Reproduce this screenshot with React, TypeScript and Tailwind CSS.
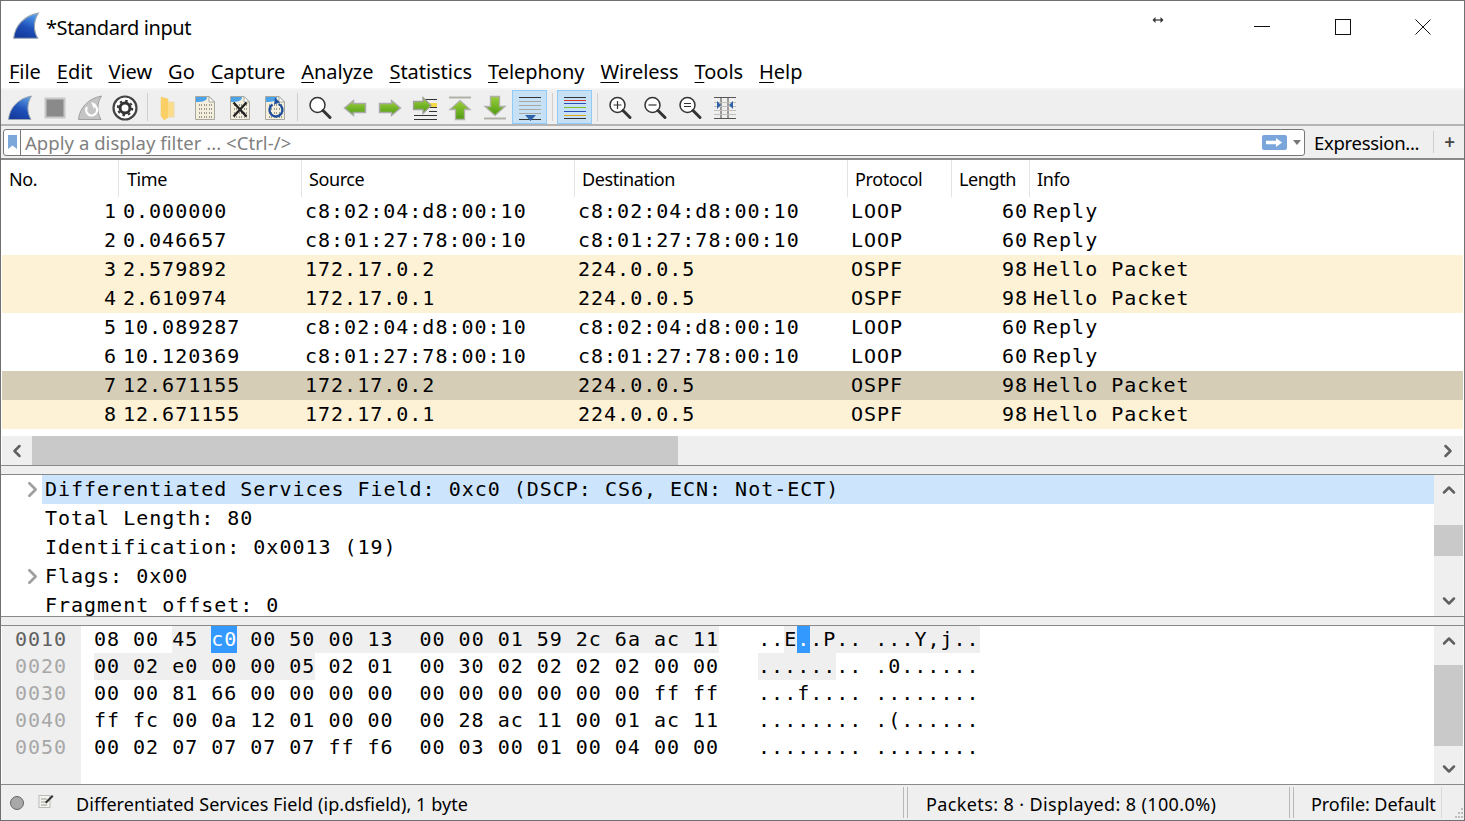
import React from 'react';
import { ChevronLeft, ChevronRight, ChevronUp, ChevronDown } from 'lucide-react';

const UI = "font-['Noto_Sans','Open_Sans',sans-serif]";
const MONO = "font-['DejaVu_Sans_Mono',monospace]";

const packets = [
  ['1', '0.000000', 'c8:02:04:d8:00:10', 'c8:02:04:d8:00:10', 'LOOP', '60', 'Reply', ''],
  ['2', '0.046657', 'c8:01:27:78:00:10', 'c8:01:27:78:00:10', 'LOOP', '60', 'Reply', ''],
  ['3', '2.579892', '172.17.0.2', '224.0.0.5', 'OSPF', '98', 'Hello Packet', 'bg-[#fdf1d6]'],
  ['4', '2.610974', '172.17.0.1', '224.0.0.5', 'OSPF', '98', 'Hello Packet', 'bg-[#fdf1d6]'],
  ['5', '10.089287', 'c8:02:04:d8:00:10', 'c8:02:04:d8:00:10', 'LOOP', '60', 'Reply', ''],
  ['6', '10.120369', 'c8:01:27:78:00:10', 'c8:01:27:78:00:10', 'LOOP', '60', 'Reply', ''],
  ['7', '12.671155', '172.17.0.2', '224.0.0.5', 'OSPF', '98', 'Hello Packet', 'bg-[#d6cdb7]'],
  ['8', '12.671155', '172.17.0.1', '224.0.0.5', 'OSPF', '98', 'Hello Packet', 'bg-[#fdf1d6]'],
];

const hexRows = [
  ['0030', '00 00 81 66 00 00 00 00  00 00 00 00 00 00 ff ff', '...f.... ........'],
  ['0040', 'ff fc 00 0a 12 01 00 00  00 28 ac 11 00 01 ac 11', '........ .(......'],
  ['0050', '00 02 07 07 07 07 ff f6  00 03 00 01 00 04 00 00', '........ ........'],
];

const Svg = ({ children }: { children: React.ReactNode }) => (
  <svg width="28" height="28" viewBox="0 0 28 28" fill="none">{children}</svg>
);

const Fin = ({ size = 28, id = 'finBlue', light = '#5a9be0' }: { size?: number; id?: string; light?: string }) => (
  <svg width={size} height={size} viewBox="0 0 28 28">
    <defs>
      <linearGradient id={id} x1="0.7" y1="0" x2="0.3" y2="1">
        <stop offset="0" stopColor={light} />
        <stop offset="0.55" stopColor="#1f4fb8" />
        <stop offset="1" stopColor="#143a9c" />
      </linearGradient>
    </defs>
    <path d="M2.500 25.500C3.500 14 12 4.500 25.500 2C21 9 20.500 18 25 25.500Z" fill={`url(#${id})`} stroke="#9aa4b0" strokeWidth="1" />
  </svg>
);

const FileIcon = ({ children }: { children?: React.ReactNode }) => (
  <Svg>
    <path d="M4.500 2.500H18L23.500 8V25.500H4.500Z" fill="#f3efdc" stroke="#a8a8a0" />
    <path d="M5 3H16C16 7 12 8 5 8Z" fill="#4da3e8" />
    <path d="M18 2.500V8H23.500Z" fill="#ffffff" stroke="#a8a8a0" />
    {[11, 15, 19, 23].map((y) => (
      <path key={y} d={`M8 ${y}h3M13 ${y}h3M18 ${y}h3`} stroke="#9a9a90" strokeWidth="2" strokeDasharray="1 1" />
    ))}
    {children}
  </Svg>
);

const Magnifier = ({ sign }: { sign?: 'plus' | 'minus' | 'equal' }) => (
  <Svg>
    <circle cx="11.500" cy="11" r="7.500" fill="#fff" stroke="#333" strokeWidth="1.500" />
    <path d="M17 16.500L24 23.500" stroke="#333" strokeWidth="3" strokeLinecap="round" />
    {sign === 'plus' && <path d="M7.500 11h8M11.500 7v8" stroke="#333" strokeWidth="1.200" />}
    {sign === 'minus' && <path d="M7.500 11h8" stroke="#333" strokeWidth="1.200" />}
    {sign === 'equal' && <path d="M8 9.500h7M8 12.500h7" stroke="#333" strokeWidth="1.200" />}
  </Svg>
);

const greenArrow = 'url(#arrowGreen)';
const ArrowDefs = () => (
  <defs>
    <linearGradient id="arrowGreen" x1="0" y1="0" x2="0" y2="1">
      <stop offset="0" stopColor="#9bd03c" />
      <stop offset="1" stopColor="#4f9a12" />
    </linearGradient>
  </defs>
);

const LeftArrow = () => (
  <Svg>
    <ArrowDefs />
    <path d="M3.500 14L12.500 6.500V9.500H24.500V18.500H12.500V21.500Z" fill={greenArrow} stroke="#aaa" strokeWidth="1.500" />
  </Svg>
);

const RightArrow = () => (
  <Svg>
    <ArrowDefs />
    <path d="M24.500 14L15.500 6.500V9.500H3.500V18.500H15.500V21.500Z" fill={greenArrow} stroke="#aaa" strokeWidth="1.500" />
  </Svg>
);

const GoToIcon = () => (
  <Svg>
    <ArrowDefs />
    <path d="M14 5.500h12M18 9.500h8M18 13.500h8M18 17.500h8M3 21.500h23M3 25.500h23" stroke="#333" strokeWidth="1.200" />
    <path d="M18 9h8v4h-8z" fill="#f5d94a" />
    <path d="M20 11.500L12 3.500V7.500H2.500V15.500H12V19.500Z" fill={greenArrow} stroke="#a0a098" strokeWidth="1.300" />
  </Svg>
);

const TopIcon = () => (
  <Svg>
    <ArrowDefs />
    <path d="M3 3.500H25" stroke="#b0b0a8" strokeWidth="2" />
    <path d="M14 6.500L24 15.500H18.500V25.500H9.500V15.500H4Z" fill={greenArrow} stroke="#b0b0a8" strokeWidth="1.300" />
  </Svg>
);

const BottomIcon = () => (
  <Svg>
    <ArrowDefs />
    <path d="M3 24.500H25" stroke="#b0b0a8" strokeWidth="2" />
    <path d="M14 21.500L24 12.500H18.500V2.500H9.500V12.500H4Z" fill={greenArrow} stroke="#b0b0a8" strokeWidth="1.300" />
  </Svg>
);

const AutoScroll = () => (
  <Svg>
    <path d="M3 3.500h22" stroke="#333" />
    <path d="M3 7.500h22M3 11.500h22M3 15.500h22M3 19.500h22" stroke="#a8a8a0" />
    <path d="M3 25.500h22" stroke="#333" />
    <path d="M9 21h11l-5.500 6z" fill="#2f62a8" />
  </Svg>
);

const Coloring = () => (
  <Svg>
    <path d="M3 3.500h22" stroke="#333" />
    <path d="M3 6.500h22" stroke="#e0302a" />
    <path d="M3 9.500h22" stroke="#2a50b8" />
    <path d="M3 13.500h22" stroke="#7cc02a" />
    <path d="M3 17.500h22" stroke="#2a50b8" />
    <path d="M3 21.500h22" stroke="#e0a810" />
    <path d="M3 24.500h22" stroke="#333" />
  </Svg>
);

const ResizeCols = () => (
  <Svg>
    <path d="M3 3.500h22M3 24.500h22M10 3v22M17 3v22" stroke="#555" strokeWidth="1.100" />
    <path d="M3 8.500h22M3 12.500h22M3 16.500h22M3 20.500h22" stroke="#c0c0b8" strokeWidth="1.100" />
    <path d="M6 7l4 4-4 4zM22 7l-4 4 4 4z" fill="#2f62a8" />
  </Svg>
);

const ToolButton = ({ children, on }: { children: React.ReactNode; on?: boolean }) => (
  <div
    className={`flex h-[34px] w-[35px] shrink-0 items-center justify-center pt-[2px] ${
      on ? 'border border-[#91c9f7] bg-[#c6e0f6]' : ''
    }`}
  >
    {children}
  </div>
);

const Sep = () => (
  <div className="flex h-[28px] w-[10px] shrink-0 justify-center">
    <div className="h-full w-px bg-[#cfcfcf]" />
  </div>
);

const ColHead = ({ label, pad, line = true }: { label: string; pad: string; line?: boolean }) => (
  <div className={`flex h-[37px] items-center pt-[2px] ${pad} ${line ? 'border-r border-[#e4e4e4]' : ''}`}>{label}</div>
);

const VScroll = ({ thumbTop, thumbH }: { thumbTop: string; thumbH: string }) => (
  <div className="flex w-[29px] shrink-0 flex-col bg-[#efefef]">
    <div className="flex h-[30px] shrink-0 items-center justify-center">
      <ChevronUp size={20} strokeWidth={3} className="text-[#606060]" />
    </div>
    <div className={`${thumbTop} ${thumbH} shrink-0 bg-[#c9c9c9]`} />
    <div className="flex-1" />
    <div className="flex h-[30px] shrink-0 items-center justify-center">
      <ChevronDown size={20} strokeWidth={3} className="text-[#606060]" />
    </div>
  </div>
);

const StatusDivider = () => (
  <div className="mx-[2px] flex h-[31px] w-[5px] shrink-0 justify-between">
    <div className="w-px bg-[#b8b8b8]" />
    <div className="w-px bg-[#b8b8b8]" />
  </div>
);

const MenuLabel = ({ first, rest }: { first: string; rest: string }) => (
  <span>
    <span className="underline decoration-1 underline-offset-[3px]">{first}</span>
    {rest}
  </span>
);

export default function App() {
  return (
    <div className={`flex h-[821px] w-[1465px] flex-col overflow-hidden border border-[#707070] bg-white text-black ${UI}`}>
      {/* title bar */}
      <div className="flex h-[53px] shrink-0 items-start">
        <div className="ml-[10px] mt-[10px]">
          <Fin size={30} id="finTitle" light="#4f9ff0" />
        </div>
        <div className="ml-[5px] mt-[12px] text-[20px] leading-[30px] tracking-[-0.4px]">*Standard input</div>
        <div className="flex-1" />
        <div className="mt-[12px] text-[#333]">
          <svg width="12" height="14" viewBox="0 0 12 14">
            <path d="M0.500 7L3.500 4V10ZM11.500 7L8.500 4V10Z" fill="#333" />
            <path d="M3 7H9" stroke="#333" strokeWidth="1.200" />
          </svg>
        </div>
        <div className="ml-[90px] mt-[18px] flex">
          <svg width="16" height="16" viewBox="0 0 16 16">
            <path d="M0 7.500H16" stroke="#111" />
          </svg>
          <svg className="ml-[65px]" width="16" height="16" viewBox="0 0 16 16">
            <rect x="0.500" y="0.500" width="15" height="15" fill="none" stroke="#111" />
          </svg>
          <svg className="ml-[64px] mr-[33px]" width="16" height="16" viewBox="0 0 16 16">
            <path d="M0.500 0.500L15.500 15.500M15.500 0.500L0.500 15.500" stroke="#111" />
          </svg>
        </div>
      </div>

      {/* menu */}
      <div className="flex h-[34px] shrink-0 items-start gap-4 pl-2 text-[20px] leading-[36px] tracking-[-0.04px]">
        <MenuLabel first="F" rest="ile" />
        <MenuLabel first="E" rest="dit" />
        <MenuLabel first="V" rest="iew" />
        <MenuLabel first="G" rest="o" />
        <MenuLabel first="C" rest="apture" />
        <MenuLabel first="A" rest="nalyze" />
        <MenuLabel first="S" rest="tatistics" />
        <MenuLabel first="T" rest="elephony" />
        <MenuLabel first="W" rest="ireless" />
        <MenuLabel first="T" rest="ools" />
        <MenuLabel first="H" rest="elp" />
      </div>

      {/* main toolbar */}
      <div className="flex h-[38px] shrink-0 items-center border-t-2 border-b-2 border-t-[#f5f5f5] border-b-[#b4b4b4] bg-[#efefef] pl-px">
        <ToolButton><Fin /></ToolButton>
        <ToolButton>
          <Svg>
            <rect x="4.500" y="4.500" width="19" height="19" fill="#8a8a8a" stroke="#c8c8c8" strokeWidth="2" />
          </Svg>
        </ToolButton>
        <ToolButton>
          <Svg>
            <path d="M2.500 25.500C3.500 14 12 4.500 25.500 2C21 9 20.500 18 25 25.500Z" fill="#c4c4c4" stroke="#a0a0a0" />
            <path d="M18 11a5.500 5.500 0 1 1-7 2" stroke="#fff" strokeWidth="2.200" />
            <path d="M15 8l5 2-2 5z" fill="#fff" />
          </Svg>
        </ToolButton>
        <ToolButton>
          <Svg>
            <circle cx="14" cy="14" r="11.500" fill="#fff" stroke="#444" strokeWidth="2.200" />
            <circle cx="14" cy="14" r="5" stroke="#333" strokeWidth="3" />
            <circle cx="14" cy="14" r="7.200" stroke="#333" strokeWidth="2" strokeDasharray="2.500 3.150" />
          </Svg>
        </ToolButton>
        <Sep />
        <ToolButton>
          <div className="-ml-[4px]">
            <Svg>
              <path d="M7 3L14 5V8H20V23H14L10 26L7 22Z" fill="#fbdc8a" stroke="#eadcae" />
              <path d="M7 3L14 5V24L10 26L7 22Z" fill="#f9cf66" />
            </Svg>
          </div>
        </ToolButton>
        <ToolButton><FileIcon /></ToolButton>
        <ToolButton>
          <FileIcon>
            <path d="M7.500 8.500L20.500 22.500M20.500 8.500L7.500 22.500" stroke="#222" strokeWidth="2.400" />
          </FileIcon>
        </ToolButton>
        <ToolButton>
          <FileIcon>
            <path d="M17.500 10a6.500 6.500 0 1 1-6 0.500" stroke="#1f4f9c" strokeWidth="2.400" />
            <path d="M14 3.500l5 5-6 2z" fill="#1f4f9c" />
          </FileIcon>
        </ToolButton>
        <Sep />
        <ToolButton><Magnifier /></ToolButton>
        <ToolButton><LeftArrow /></ToolButton>
        <ToolButton><RightArrow /></ToolButton>
        <ToolButton><GoToIcon /></ToolButton>
        <ToolButton><TopIcon /></ToolButton>
        <ToolButton><BottomIcon /></ToolButton>
        <ToolButton on><AutoScroll /></ToolButton>
        <Sep />
        <ToolButton on><Coloring /></ToolButton>
        <Sep />
        <ToolButton><Magnifier sign="plus" /></ToolButton>
        <ToolButton><Magnifier sign="minus" /></ToolButton>
        <ToolButton><Magnifier sign="equal" /></ToolButton>
        <ToolButton><ResizeCols /></ToolButton>
      </div>

      {/* filter bar */}
      <div className="flex h-[34px] shrink-0 items-center border-b-2 border-b-[#8a8a8a] bg-[#efefef] pl-[2px]">
        <div className="flex h-[27px] w-[1302px] shrink-0 items-center rounded-[3px] border border-[#777] bg-white">
          <div className="flex h-full w-[17px] shrink-0 items-center justify-center border-r border-[#777]">
            <svg width="9" height="14" viewBox="0 0 9 14">
              <path d="M0 0H9V14L4.500 10.500L0 14Z" fill="#7ba7d9" />
            </svg>
          </div>
          <div className="ml-[4px] text-[18.5px] leading-[25px] tracking-[0.05px] text-[#808080]">Apply a display filter ... &lt;Ctrl-/&gt;</div>
          <div className="flex-1" />
          <svg width="25" height="15" viewBox="0 0 25 15">
            <rect width="25" height="15" rx="2" fill="#7aa6dc" />
            <path d="M4 5.800H14V3L20 7.500L14 12V9.200H4Z" fill="#fff" />
          </svg>
          <svg className="ml-[6px] mr-[3px]" width="8" height="5" viewBox="0 0 8 5">
            <path d="M0 0H8L4 5Z" fill="#777" />
          </svg>
        </div>
        <div className="ml-[9px] pt-[2px] text-[18.5px] tracking-[-0.3px]">Expression...</div>
        <div className="ml-[14px] h-[22px] w-px bg-[#cfcfcf]" />
        <div className="ml-[10px] text-[19px] font-semibold leading-none text-[#444]">+</div>
      </div>

      {/* packet list */}
      <div className="flex h-[306px] shrink-0 flex-col border-b border-b-[#8a8a8a] pl-px pr-px">
        <div className="grid h-[37px] shrink-0 grid-cols-[117px_183px_273px_273px_104px_78px_1fr] items-start text-[18px] tracking-[-0.4px]">
          <ColHead label="No." pad="pl-[7px]" />
          <ColHead label="Time" pad="pl-[8px]" />
          <ColHead label="Source" pad="pl-[7px]" />
          <ColHead label="Destination" pad="pl-[7px]" />
          <ColHead label="Protocol" pad="pl-[7px]" />
          <ColHead label="Length" pad="pl-[7px]" />
          <ColHead label="Info" pad="pl-[7px]" line={false} />
        </div>
        {packets.map((p) => (
          <div
            key={p[0]}
            className={`grid h-[29px] shrink-0 grid-cols-[117px_183px_273px_273px_104px_78px_1fr] items-center whitespace-pre text-[20px] leading-[29px] tracking-[1px] ${MONO} ${p[7]}`}
          >
            <div className="pr-[2px] text-right">{p[0]}</div>
            <div className="pl-[4px]">{p[1]}</div>
            <div className="pl-[3px]">{p[2]}</div>
            <div className="pl-[3px]">{p[3]}</div>
            <div className="pl-[3px]">{p[4]}</div>
            <div className="pr-[2px] text-right">{p[5]}</div>
            <div className="pl-[3px]">{p[6]}</div>
          </div>
        ))}
        <div className="h-[7px] shrink-0" />
        <div className="flex h-[29px] shrink-0 items-center bg-[#efefef]">
          <div className="flex h-full w-[30px] items-center justify-center">
            <ChevronLeft size={20} strokeWidth={3} className="text-[#606060]" />
          </div>
          <div className="h-full w-[646px] bg-[#c9c9c9]" />
          <div className="flex-1" />
          <div className="flex h-full w-[30px] items-center justify-center">
            <ChevronRight size={20} strokeWidth={3} className="text-[#606060]" />
          </div>
        </div>
      </div>

      <div className="h-[9px] shrink-0 border-b border-[#8a8a8a] bg-[#efefef]" />

      {/* packet details */}
      <div className="flex h-[142px] shrink-0 overflow-hidden border-b border-[#8a8a8a] pl-px pr-px">
        <div className={`min-w-0 flex-1 whitespace-pre text-[20px] leading-[29px] tracking-[0.98px] ${MONO}`}>
          <div className="flex h-[29px]">
            <div className="flex w-[40px] shrink-0 items-center justify-end">
              <ChevronRight size={25} strokeWidth={2.600} className="-mr-[3px] shrink-0 text-[#a0a0a0]" />
            </div>
            <div className="flex-1 bg-[#cce5fc] pl-[3px]">Differentiated Services Field: 0xc0 (DSCP: CS6, ECN: Not-ECT)</div>
          </div>
          <div className="h-[29px] pl-[43px]">Total Length: 80</div>
          <div className="h-[29px] pl-[43px]">Identification: 0x0013 (19)</div>
          <div className="flex h-[29px]">
            <div className="flex w-[40px] shrink-0 items-center justify-end">
              <ChevronRight size={25} strokeWidth={2.600} className="-mr-[3px] shrink-0 text-[#a0a0a0]" />
            </div>
            <div className="pl-[3px]">Flags: 0x00</div>
          </div>
          <div className="h-[29px] pl-[43px]">Fragment offset: 0</div>
        </div>
        <VScroll thumbTop="mt-[20px]" thumbH="h-[31px]" />
      </div>

      <div className="h-[9px] shrink-0 border-b border-[#8a8a8a] bg-[#efefef]" />

      {/* packet bytes */}
      <div className="flex h-[159px] shrink-0 overflow-hidden border-b border-[#8a8a8a] pl-px pr-px">
        <div className="flex min-w-0 flex-1 whitespace-pre text-[20px] leading-[27px] tracking-[0.98px]">
          <div className={`w-[79px] shrink-0 bg-[#efefef] pl-[13px] text-[#a8a8a8] ${MONO}`}>
            <div className="text-[#606060]">0010</div>
            <div>0020</div>
            {hexRows.map((r) => (
              <div key={r[0]}>{r[0]}</div>
            ))}
          </div>
          <div className={`pl-[13px] ${MONO}`}>
            <div className="h-[27px]">
              {'08 00 '}
              <span className="inline-block h-[27px] bg-[#efefef]">45 </span>
              <span className="inline-block h-[27px] bg-[#3399ff] text-white">c0</span>
              <span className="inline-block h-[27px] bg-[#efefef]"> 00 50 00 13  00 00 01 59 2c 6a ac 11</span>
              {'   '}
              {'..'}
              <span className="inline-block h-[27px] bg-[#efefef]">E</span>
              <span className="inline-block h-[27px] bg-[#3399ff] text-white">.</span>
              <span className="inline-block h-[27px] bg-[#efefef]">.P.. ...Y,j..</span>
            </div>
            <div className="h-[27px]">
              <span className="inline-block h-[27px] bg-[#efefef]">00 02 e0 00 00 05</span>
              {' 02 01  00 30 02 02 02 02 00 00   '}
              <span className="inline-block h-[27px] bg-[#efefef]">......</span>
              {'.. .0......'}
            </div>
            {hexRows.map((r) => (
              <div key={r[0]} className="h-[27px]">
                {r[1]}
                {'   '}
                {r[2]}
              </div>
            ))}
          </div>
        </div>
        <VScroll thumbTop="mt-[9px]" thumbH="h-[81px]" />
      </div>

      {/* status bar */}
      <div className="flex h-[35px] shrink-0 items-center bg-[#efefef] text-[18px] tracking-[0.06px]">
        <div className="ml-[9px] h-[14px] w-[14px] shrink-0 rounded-full border border-[#666] bg-[#a8a8a8]" />
        <svg className="ml-[14px] mb-[4px] shrink-0" width="16" height="14" viewBox="0 0 16 14">
          <rect x="1" y="1.500" width="11" height="12" fill="#f4f4ec" stroke="#bbb" />
          <path d="M3 5h6M3 8h6M3 11h6" stroke="#999" />
          <path d="M7 8L14 1L15.500 2.500L8.500 9.500Z" fill="#333" />
        </svg>
        <div className="ml-[22px] pt-[3px]">Differentiated Services Field (ip.dsfield), 1 byte</div>
        <div className="flex-1" />
        <StatusDivider />
        <div className="ml-[16px] w-[361px] shrink-0 pt-[3px] tracking-[0.38px]">Packets: 8 · Displayed: 8 (100.0%)</div>
        <StatusDivider />
        <div className="ml-[15px] w-[125px] shrink-0 whitespace-nowrap pt-[3px] tracking-[-0.07px]">Profile: Default</div>
        <div className="ml-[5px] h-[31px] w-px shrink-0 bg-[#d8d8d8]" />
        <svg className="ml-[12px] mt-[20px] shrink-0" width="10" height="12" viewBox="0 0 10 12">
          <path d="M7 1h2v2h-2zM4 5h2v2h-2zM7 5h2v2h-2zM1 9h2v2h-2zM4 9h2v2h-2zM7 9h2v2h-2z" fill="#bdbdbd" />
        </svg>
      </div>
    </div>
  );
}
